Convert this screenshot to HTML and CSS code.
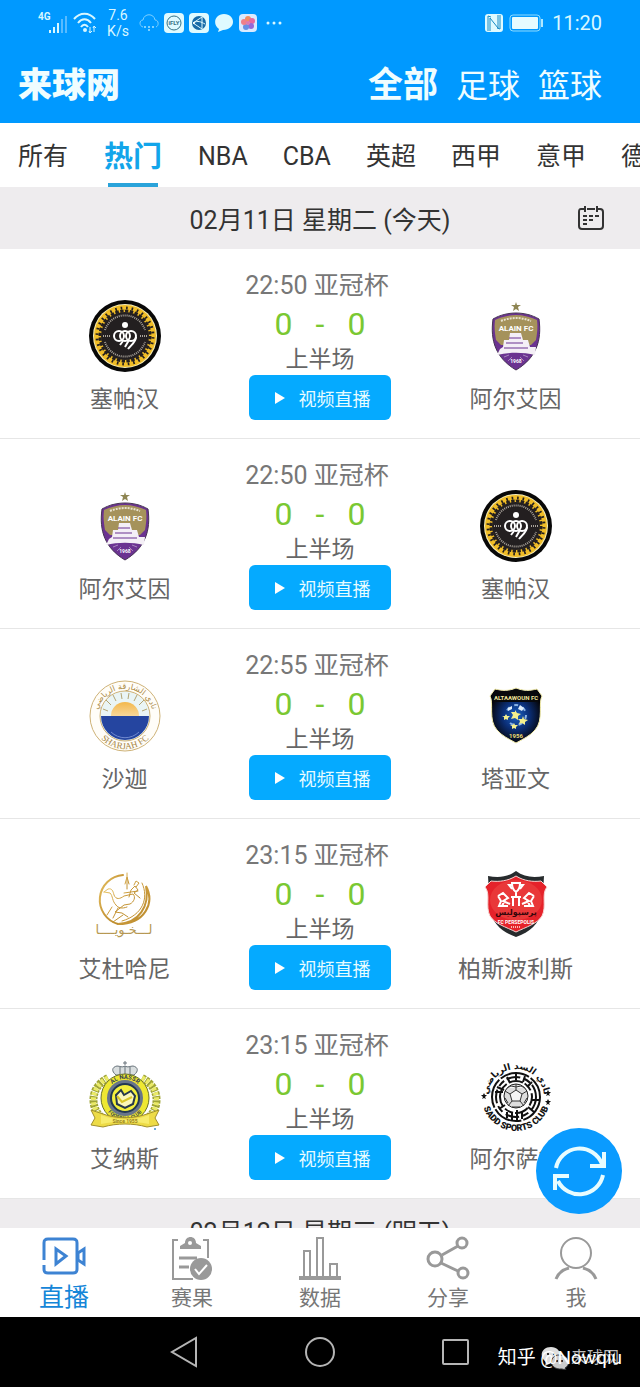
FILE: index.html
```
<!DOCTYPE html>
<html lang="zh">
<head>
    <meta charset="UTF-8">
    <meta name="viewport" content="width=device-width, initial-scale=1.0">
    <title>来球网</title>
    <link rel="stylesheet" href="styles.css">
</head>
<body>
    <!-- 球队徽章 -->
    <svg class="sprite" aria-hidden="true">
        <defs>
            <linearGradient id="gold" x1="0" y1="0" x2="1" y2="1">
                <stop offset="0" stop-color="#e6c263"/>
                <stop offset="0.5" stop-color="#c9993a"/>
                <stop offset="1" stop-color="#b98a2c"/>
            </linearGradient>
            <linearGradient id="sun" x1="0" y1="0" x2="0" y2="1">
                <stop offset="0" stop-color="#f3b84c"/>
                <stop offset="1" stop-color="#f7d79a"/>
            </linearGradient>
            <radialGradient id="night">
                <stop offset="0" stop-color="#1b62c4"/>
                <stop offset="0.5" stop-color="#0b2f78"/>
                <stop offset="1" stop-color="#05060c"/>
            </radialGradient>
            <path id="nassrTop" d="M17 38a19 19 0 0 1 38 0"/>
            <path id="nassrBottom" d="M14 38a22 22 0 0 0 44 0"/>
            <path id="ringTopWide" d="M8 37a28 28 0 0 1 56 0"/>
            <path id="ringBottomWide" d="M3 36a33 33 0 0 0 66 0"/>
            <path id="saddBottom" d="M2 37a34 34 0 0 0 68 0"/>
        </defs>
        <symbol id="sepahan" viewBox="0 0 72 72">
            <circle cx="36" cy="36" r="36" fill="#080808"/>
            <circle cx="36" cy="36" r="32" fill="#f7eeb8"/>
            <circle cx="36" cy="36" r="31" fill="#f0bd27"/>
            <circle cx="36" cy="36" r="24" fill="#231f20"/>
            <g fill="none" stroke="#231f20">
                <circle cx="36" cy="36" r="25" stroke-width="3" pathLength="320" stroke-dasharray="7 3"/>
                <circle cx="36" cy="36" r="28" stroke-width="3" pathLength="320" stroke-dasharray="3 7" stroke-dashoffset="-2"/>
            </g>
            <g fill="none" stroke="#a9a39a" stroke-width="2" stroke-dasharray="1 1">
                <path d="M16 30a21 21 0 0 1 40 0M16 42a21 21 0 0 0 40 0"/>
                <path d="M14 36h7M51 36h7"/>
            </g>
            <circle cx="36" cy="25" r="3" fill="#fff"/>
            <g fill="none" stroke="#fff" stroke-width="2">
                <circle cx="30" cy="36" r="5"/>
                <circle cx="36" cy="36" r="5"/>
                <circle cx="42" cy="36" r="5"/>
                <path d="M34 41l-3 4M40 40l-4 7M47 37c0 5-5 8-8 12"/>
            </g>
        </symbol>
        <symbol id="alain" viewBox="0 0 72 72">
            <path d="M36 2l1 3h4l-3 2 1 4-3-2-3 2 1-4-3-2h4z" fill="#8e8552"/>
            <path d="M36 13c8 0 16 2 23 6 3 22-3 39-23 51C16 58 10 41 13 19c7-4 15-6 23-6z" fill="#6b3391" stroke="#453253" stroke-width="1"/>
            <path d="M36 15c7 0 15 2 21 5 1 8 0 14-1 20l-5 5H21l-5-5c-1-6-2-12-1-20 6-3 14-5 21-5z" fill="#a5925b"/>
            <path d="M21 21c10-4 20-4 30 0" fill="none" stroke="#e8e1cb" stroke-width="2" stroke-dasharray="2 1"/>
            <text x="36" y="31" text-anchor="middle" font-size="8" font-weight="700" fill="#fff">ALAIN FC</text>
            <path d="M30 33h11l2 7h5l2 7h6l-1 8c-12-3-26-3-38 0l3-6 3-2 1-7h5z" fill="#f4eff6"/>
            <path d="M29 38h12M26 43h17M24 48h24" stroke="#6b3391" stroke-width="1"/>
            <path d="M24 57l5-2M28 61l4-4M48 57l-5-2M44 61l-4-4" stroke="#a786bd"/>
            <text x="36" y="63" text-anchor="middle" font-size="5" font-weight="700" fill="#fff">1968</text>
        </symbol>
        <symbol id="sharjah" viewBox="0 0 72 72">
            <circle cx="36" cy="36" r="35" fill="#fffdf8" stroke="#ceb277" stroke-width="1"/>
            <circle cx="36" cy="36" r="25" fill="#eaf5f5" stroke="#ceb277" stroke-width="1"/>
            <path d="M22 36a14 14 0 0 1 28 0z" fill="url(#sun)"/>
            <path d="M19 31l-5-2M22 25l-5-5M27 21l-3-6M33 19l-1-6M39 19l1-6M45 21l3-6M50 25l5-5M53 31l5-2" stroke="#b3a473" stroke-width="1"/>
            <path d="M12 36h48a24 24 0 0 1-48 0z" fill="#2545a0"/>
            <path d="M22 52a20 20 0 0 0 28 0" fill="none" stroke="#6f88cf" stroke-width="1"/>
            <text class="arabic" font-size="8" fill="#ab8a45" text-anchor="middle"><textPath href="#ringTopWide" startOffset="50%">نادي الشارقة الرياضي</textPath></text>
            <text class="serif" font-size="9" fill="#a5833f" text-anchor="middle"><textPath href="#ringBottomWide" startOffset="50%">SHARJAH FC</textPath></text>
        </symbol>
        <symbol id="altaawoun" viewBox="0 0 72 72">
            <path d="M36 8c-7 3-14 3-21 1l-5 7c4 7-2 24 7 34 5 6 12 9 19 13 7-4 14-7 19-13 9-10 3-27 7-34l-5-7c-7 2-14 2-21-1z" fill="url(#night)" stroke="#f2ecac" stroke-width="1"/>
            <path d="M36 9c-7 3-14 3-20 1l-4 6c2 2 2 4 2 6h44c0-2 0-4 2-6l-4-6c-6 2-13 2-20-1z" fill="#08090c"/>
            <text x="36" y="20" text-anchor="middle" font-size="6" font-weight="700" fill="#f3e69b">ALTAAWOUN FC</text>
            <circle cx="36" cy="35" r="10" fill="none" stroke="#8bb4e6" stroke-width="2" stroke-dasharray="4 5"/>
            <g fill="#f4ef8c">
                <path d="M35 30l2 3 4 1-3 2v4l-3-2-4 1 2-4-2-3h4z"/>
                <path d="M43 36l1 3 4 1-3 2v3l-3-2-3 1 1-3-2-2h4z"/>
                <path d="M34 43l1 2h3l-2 2v2l-2-1-2 1v-3l-2-1h3z"/>
                <path d="M26 34l1 2h3l-2 2v2l-2-1-2 1v-3l-2-1h3z"/>
            </g>
            <path d="M40 25l4 3-2 3-4-2zM28 28l4-2v3l-4 2z" fill="#e1eefb"/>
            <text x="36" y="58" text-anchor="middle" font-size="6" font-weight="700" fill="#f0df70">1956</text>
        </symbol>
        <symbol id="duhail" viewBox="0 0 72 72">
            <g fill="none" stroke="url(#gold)" stroke-linecap="round">
                <path d="M34 5a25 25 0 0 0-5 49" stroke-width="2"/>
                <path d="M57 16c9 17-1 38-28 38 21-1 32-18 28-38z" stroke-width="2"/>
                <path d="M53 13c7 15 1 32-20 38" stroke-width="1"/>
                <path d="M38 3v16M36 14l2-7 2 7" stroke-width="1"/>
                <path d="M15 22l4-3c4-1 5 2 6 6 2 5 6 4 10 1l9-2c3 3 1 8-3 10l-6 1-9 7 7 1 6 4" stroke-width="1"/>
                <path d="M15 22l6 1c3 3 2 8 6 12 2 3 6 4 11 2M23 37l-5 8M29 38l-5 10M34 45l-10 7" stroke-width="1"/>
                <path d="M40 27l2-7 4-4 3 4-4 3 6 5M45 15l2-4 3 2-3 4M35 23l14-2" stroke-width="1"/>
            </g>
            <text class="arabic" x="35" y="64" text-anchor="middle" font-size="13" fill="#b69852">لـــخـويــــا</text>
        </symbol>
        <symbol id="persepolis" viewBox="0 0 72 72">
            <path d="M8 6c11 2 20 1 28-5 8 6 17 7 28 5l-2 34c-3 14-12 22-26 27C22 62 13 54 10 40z" fill="#272b2d"/>
            <path d="M36 6c-8 5-17 6-25 5l-6 6c6 7 0 19 5 29 5 8 16 11 26 16 10-5 21-8 26-16 5-10-1-22 5-29l-6-6c-8 1-17 0-25-5z" fill="#e5222a" stroke="#f6d5d3" stroke-width="1"/>
            <ellipse cx="36" cy="30" rx="26" ry="20" fill="#f05a50" opacity="0.4"/>
            <g fill="none" stroke="#fff" stroke-width="2">
                <path d="M32 13h8c0 5-1 7-4 9-3-2-4-4-4-9zM32 15h-3l3 4M40 15h3l-3 4M36 22v4M31 27h10M33 27v9M39 27v9"/>
                <path d="M18 26l5-3 5 5-5 3 7 3M18 26l3 5-2 5h9M25 30l-3 6M54 26l-5-3-5 5 5 3-7 3M54 26l-3 5 2 5h-9M47 30l3 6"/>
            </g>
            <text class="arabic" x="36" y="45" text-anchor="middle" font-size="8" font-weight="700" fill="#35060a">پرسپولیس</text>
            <text x="36" y="54" text-anchor="middle" font-size="5" font-weight="700" fill="#fff">FC PERSEPOLIS</text>
            <path d="M31 57h10" stroke="#f8b8b4" stroke-width="2" stroke-dasharray="1 1"/>
        </symbol>
        <symbol id="nassr" viewBox="0 0 72 72">
            <path d="M27 15c-5-4-4-8 1-9 3 0 5 2 8 0 3 2 5 0 8 0 5 1 6 5 1 9z" fill="#d9dedf" stroke="#68737b" stroke-width="1"/>
            <path d="M31 7v7M36 6v9M41 7v7M36 1v4M34 3h4" stroke="#68737b" stroke-width="1"/>
            <g fill="none">
                <path d="M19 18C1 27 1 47 12 57M53 18c18 9 18 29 7 39" stroke="#a0a537" stroke-width="8" stroke-dasharray="3 1"/>
                <path d="M19 18C1 27 1 47 12 57M53 18c18 9 18 29 7 39" stroke="#eaea68" stroke-width="5" stroke-dasharray="3 2"/>
            </g>
            <circle cx="36" cy="38" r="24" fill="#eee832" stroke="#6b7325" stroke-width="1"/>
            <circle cx="36" cy="38" r="18" fill="#68758a"/>
            <circle cx="36" cy="38" r="14" fill="#f3ef3d" stroke="#223851" stroke-width="2"/>
            <path d="M27 35l5-5 3 5 7-4 4 5-2 8-8 4-8-4z" fill="#fbf7b8" stroke="#26384b" stroke-width="2"/>
            <path d="M28 36l5 6 10-5" fill="none" stroke="#d9c728" stroke-width="2"/>
            <text font-size="6" font-weight="700" fill="#354250" text-anchor="middle"><textPath href="#nassrTop" startOffset="50%">AL NASSR</textPath></text>
            <text font-size="5" font-weight="700" fill="#354250" text-anchor="middle"><textPath href="#nassrBottom" startOffset="50%">FOOTBALL CLUB</textPath></text>
            <path d="M2 50l12 4c14 5 30 5 44 0l12-4-4 8 4 7-12 2c-14-4-30-4-44 0L2 65l4-7z" fill="#eddb47" stroke="#a2902d" stroke-width="1"/>
            <path d="M12 55c15 6 33 6 48 0v9c-15-3-33-3-48 0z" fill="#f7ec6c"/>
            <text x="36" y="63" text-anchor="middle" font-size="5" font-weight="700" fill="#9a821e">Since 1955</text>
            <circle cx="66" cy="69" r="1" fill="#3d8bc7"/>
        </symbol>
        <symbol id="sadd" viewBox="0 0 72 72">
            <circle cx="36" cy="37" r="24" fill="#fff" stroke="#111" stroke-width="2" stroke-dasharray="30 2"/>
            <g fill="none" stroke="#111" stroke-width="2">
                <circle cx="36" cy="37" r="20" stroke-dasharray="14 4 7 3"/>
                <circle cx="36" cy="37" r="16" stroke-dasharray="9 3 14 2"/>
                <path d="M15 32h8M17 27l7 3M36 13v7M27 17l3 6M45 16l-2 6M52 22l-5 5M19 49l6-4M27 52v6M32 52v8M37 50v10M42 52v7M48 47l6 5M51 40h8"/>
            </g>
            <circle cx="36" cy="36" r="12" fill="#ddd" stroke="#222" stroke-width="1"/>
            <path d="M36 30l6 4-2 7h-8l-2-7zM36 30v-6M42 34l5-3M40 41l4 5M32 41l-4 5M30 34l-5-3M27 28l4-2 5 1 5-1 4 2M25 38l3 5M47 38l-3 5M32 47h8" fill="#f6f6f6" stroke="#333" stroke-width="1"/>
            <text class="arabic" font-size="9" font-weight="700" fill="#111" text-anchor="middle"><textPath href="#ringTopWide" startOffset="50%">نادي السد الرياضي</textPath></text>
            <text font-size="9" font-weight="900" fill="#111" text-anchor="middle"><textPath href="#saddBottom" startOffset="50%">SADD SPORTS CLUB</textPath></text>
            <path d="M4 33l1 2h2l-2 2 1 2-2-1-2 1 1-2-2-2h2zM68 30l1 2h2l-2 2 1 2-2-1-2 1 1-2-2-2h2zM68 39l1 2h2l-2 2 1 2-2-1-2 1 1-2-2-2h2z" fill="#111"/>
        </symbol>
    </svg>

    <header class="header">
        <div class="status-bar">
            <div class="status-left">
                <svg width="30" height="24" viewBox="0 0 30 24">
                    <text x="0" y="9" font-size="10" font-weight="700" fill="#d8f7ff">4G</text>
                    <path d="M12 22v-3M16 22v-6M20 22V12" stroke="#d8f7ff" stroke-width="2"/>
                    <path d="M24 22V8M28 22V5" stroke="#58bbff" stroke-width="2"/>
                </svg>
                <svg width="24" height="22" viewBox="0 0 24 22" fill="none" stroke="#d8f7ff" stroke-width="2">
                    <path d="M1 7c6-7 15-7 21 0M5 11c4-5 9-5 13 0M8 15c2-3 5-3 7 0"/>
                    <circle cx="12" cy="18" r="1" fill="#d8f7ff"/>
                    <path d="M17 15v5M21 15v5" stroke-width="1"/>
                    <path d="M16 19l1 2 2-2M20 16l1-2 2 2" stroke-width="1"/>
                </svg>
                <div class="speed">7.6<br>K/s</div>
                <svg width="20" height="20" viewBox="0 0 20 20" fill="none" stroke="#7dd0ff" stroke-width="1">
                    <path d="M4 14C0 13 0 7 4 7c1-7 11-7 12 0 4 0 4 6 1 7"/>
                    <path d="M6 13v3M10 13v5M14 13v3" stroke-width="2" stroke-dasharray="2 1"/>
                </svg>
                <svg width="20" height="20" viewBox="0 0 20 20">
                    <rect width="20" height="20" rx="4" fill="#dffaff"/>
                    <circle cx="10" cy="10" r="7" fill="none" stroke="#347287"/>
                    <text x="10" y="12" text-anchor="middle" font-size="6" font-weight="700" fill="#347287">iFLY</text>
                </svg>
                <svg width="20" height="20" viewBox="0 0 20 20">
                    <rect width="20" height="20" rx="4" fill="#dffaff"/>
                    <circle cx="10" cy="10" r="7" fill="#176aa7"/>
                    <path d="M4 10l9-6M4 10l9 6M13 4v12M4 10c5-3 8-1 12 1" fill="none" stroke="#dffaff"/>
                    <circle cx="5" cy="10" r="1" fill="#fff"/>
                </svg>
                <svg width="20" height="20" viewBox="0 0 20 20">
                    <path d="M10 1c6 0 9 4 9 8s-4 8-10 8l-5 2 1-3C-2 11 1 1 10 1z" fill="#dffaff"/>
                </svg>
                <svg width="18" height="18" viewBox="0 0 18 18">
                    <rect width="18" height="18" rx="4" fill="#d9eaff"/>
                    <circle cx="9" cy="5" r="3" fill="#f18e62"/>
                    <circle cx="13" cy="7" r="3" fill="#e669a1"/>
                    <circle cx="12" cy="12" r="3" fill="#9568d8"/>
                    <circle cx="7" cy="13" r="3" fill="#6690e5"/>
                    <circle cx="5" cy="8" r="3" fill="#ef7f89"/>
                    <circle cx="9" cy="9" r="2" fill="#dc7bb1"/>
                </svg>
                <svg class="dots" width="16" height="4" viewBox="0 0 16 4" fill="#d8f7ff">
                    <circle cx="2" cy="2" r="1.5"/><circle cx="8" cy="2" r="1.5"/><circle cx="14" cy="2" r="1.5"/>
                </svg>
            </div>
            <div class="status-right">
                <svg width="20" height="20" viewBox="0 0 20 20">
                    <rect x="1" y="1" width="18" height="18" rx="3" fill="#dffaff"/>
                    <path d="M6 18V5l8 10V2" fill="none" stroke="#168bc4" stroke-width="1"/>
                    <path d="M4 18V3l3 1M16 2v14l-3-1" fill="none" stroke="#168bc4" stroke-width="1"/>
                </svg>
                <svg width="36" height="18" viewBox="0 0 36 18">
                    <rect x="1" y="1" width="30" height="16" rx="3" fill="none" stroke="#8cdaff" stroke-width="1"/>
                    <rect x="3" y="3" width="26" height="12" rx="1" fill="#e6fbff"/>
                    <path d="M33 5v8" stroke="#b0e8ff" stroke-width="2"/>
                </svg>
                <span class="clock">11:20</span>
            </div>
        </div>
        <div class="title-bar">
            <h1 class="brand">来球网</h1>
            <nav class="sports">
                <a href="#all" class="active">全部</a>
                <a href="#football">足球</a>
                <a href="#basketball">篮球</a>
            </nav>
        </div>
    </header>

    <nav class="tabs">
        <a href="#all">所有</a>
        <a href="#hot" class="active">热门</a>
        <a href="#nba">NBA</a>
        <a href="#cba">CBA</a>
        <a href="#epl">英超</a>
        <a href="#laliga">西甲</a>
        <a href="#seriea">意甲</a>
        <a href="#bundesliga">德甲</a>
    </nav>

    <main class="content">
        <div class="match-list">
            <div class="date-bar">
                <h2>02月11日 星期二 (今天)</h2>
                <button class="calendar" type="button" aria-label="选择日期">
                    <svg width="28" height="26" viewBox="0 0 28 26" fill="none" stroke="#333" stroke-width="2">
                        <path d="M7 4H4C2 4 2 5 2 7v14c0 2 1 3 3 3h18c2 0 3-1 3-3V7c0-2-1-3-3-3h-2M10 4h8M8 1v6M20 1v6"/>
                        <path d="M6 11h4M12 11h4M18 11h4M6 15h4M12 15h4M6 19h4"/>
                    </svg>
                </button>
            </div>

            <article class="match">
                <div class="team"><svg class="logo"><use href="#sepahan"/></svg><span>塞帕汉</span></div>
                <div class="info">
                    <div class="time">22:50 亚冠杯</div>
                    <div class="score"><span>0</span><span>-</span><span>0</span></div>
                    <div class="period">上半场</div>
                    <button class="live-btn" type="button"><svg width="12" height="14" viewBox="0 0 12 14"><path d="M1 1l10 6-10 6z"/></svg>视频直播</button>
                </div>
                <div class="team"><svg class="logo"><use href="#alain"/></svg><span>阿尔艾因</span></div>
            </article>

            <article class="match">
                <div class="team"><svg class="logo"><use href="#alain"/></svg><span>阿尔艾因</span></div>
                <div class="info">
                    <div class="time">22:50 亚冠杯</div>
                    <div class="score"><span>0</span><span>-</span><span>0</span></div>
                    <div class="period">上半场</div>
                    <button class="live-btn" type="button"><svg width="12" height="14" viewBox="0 0 12 14"><path d="M1 1l10 6-10 6z"/></svg>视频直播</button>
                </div>
                <div class="team"><svg class="logo"><use href="#sepahan"/></svg><span>塞帕汉</span></div>
            </article>

            <article class="match">
                <div class="team"><svg class="logo"><use href="#sharjah"/></svg><span>沙迦</span></div>
                <div class="info">
                    <div class="time">22:55 亚冠杯</div>
                    <div class="score"><span>0</span><span>-</span><span>0</span></div>
                    <div class="period">上半场</div>
                    <button class="live-btn" type="button"><svg width="12" height="14" viewBox="0 0 12 14"><path d="M1 1l10 6-10 6z"/></svg>视频直播</button>
                </div>
                <div class="team"><svg class="logo"><use href="#altaawoun"/></svg><span>塔亚文</span></div>
            </article>

            <article class="match">
                <div class="team"><svg class="logo"><use href="#duhail"/></svg><span>艾杜哈尼</span></div>
                <div class="info">
                    <div class="time">23:15 亚冠杯</div>
                    <div class="score"><span>0</span><span>-</span><span>0</span></div>
                    <div class="period">上半场</div>
                    <button class="live-btn" type="button"><svg width="12" height="14" viewBox="0 0 12 14"><path d="M1 1l10 6-10 6z"/></svg>视频直播</button>
                </div>
                <div class="team"><svg class="logo"><use href="#persepolis"/></svg><span>柏斯波利斯</span></div>
            </article>

            <article class="match">
                <div class="team"><svg class="logo"><use href="#nassr"/></svg><span>艾纳斯</span></div>
                <div class="info">
                    <div class="time">23:15 亚冠杯</div>
                    <div class="score"><span>0</span><span>-</span><span>0</span></div>
                    <div class="period">上半场</div>
                    <button class="live-btn" type="button"><svg width="12" height="14" viewBox="0 0 12 14"><path d="M1 1l10 6-10 6z"/></svg>视频直播</button>
                </div>
                <div class="team"><svg class="logo"><use href="#sadd"/></svg><span>阿尔萨德</span></div>
            </article>

            <div class="date-bar">
                <h2>02月12日 星期三 (明天)</h2>
            </div>
        </div>

        <button class="refresh" type="button" aria-label="刷新">
            <svg width="56" height="56" viewBox="0 0 56 56" fill="none" stroke="#e8fcff" stroke-width="4">
                <path d="M5 25A24 24 0 0 1 51 21M53 9v14H39"/>
                <path d="M52 32A24 24 0 0 1 7 38M4 47V33h14"/>
            </svg>
        </button>
    </main>

    <nav class="bottom-nav">
        <a href="#live" class="active">
            <svg width="44" height="44" viewBox="0 0 44 44" fill="none" stroke="#3d83d3" stroke-width="3">
                <path d="M2 24V7c0-3 1-4 4-4h25c3 0 4 1 4 4v26c0 3-1 4-4 4H6c-3 0-4-1-4-4v-4"/>
                <path d="M14 13l10 7-10 8zM36 17l6-4v15l-6-4z"/>
            </svg>
            <span>直播</span>
        </a>
        <a href="#results">
            <svg width="44" height="44" viewBox="0 0 44 44" fill="none" stroke="#999" stroke-width="3">
                <path d="M8 4H3v39h20M33 4h5v18" stroke-width="2"/>
                <path d="M10 13v-3l5-3c0-8 11-8 11 0l5 3v3z" fill="#999" stroke="none"/>
                <circle cx="20" cy="7" r="2" fill="#fff" stroke="none"/>
                <path d="M9 22h18M9 31h10"/>
                <circle cx="31" cy="33" r="11" fill="#999" stroke="none"/>
                <path d="M25 33l4 5 8-9" stroke="#fff" stroke-width="2"/>
            </svg>
            <span>赛果</span>
        </a>
        <a href="#data">
            <svg width="44" height="44" viewBox="0 0 44 44" fill="none" stroke="#999" stroke-width="2">
                <path d="M6 41V15h6v26M19 41V2h6v39M32 41V28h7v13"/>
                <path d="M1 42h42" stroke-width="4"/>
            </svg>
            <span>数据</span>
        </a>
        <a href="#share">
            <svg width="44" height="44" viewBox="0 0 44 44" fill="none" stroke="#999" stroke-width="3">
                <circle cx="9" cy="23" r="7"/>
                <circle cx="36" cy="7" r="5"/>
                <circle cx="37" cy="37" r="5"/>
                <path d="M16 19l16-9M15 27l17 8"/>
            </svg>
            <span>分享</span>
        </a>
        <a href="#me">
            <svg width="44" height="44" viewBox="0 0 44 44" fill="none" stroke="#999" stroke-width="2">
                <circle cx="22" cy="17" r="15"/>
                <path d="M15 32C7 34 4 38 2 43M29 32c8 2 11 6 13 11" stroke-width="3"/>
            </svg>
            <span>我</span>
        </a>
    </nav>

    <footer class="system-nav">
        <button type="button" aria-label="返回">
            <svg width="32" height="32" viewBox="0 0 32 32"><path d="M28 2v28L4 16z"/></svg>
        </button>
        <button type="button" aria-label="主页">
            <svg width="32" height="32" viewBox="0 0 32 32"><circle cx="16" cy="16" r="14"/></svg>
        </button>
        <button type="button" aria-label="最近任务">
            <svg width="32" height="32" viewBox="0 0 32 32"><rect x="3" y="4" width="25" height="24" rx="1"/></svg>
        </button>
        <div class="wechat-mark">
            <svg width="28" height="24" viewBox="0 0 28 24">
                <path d="M10 1c12 0 12 16 0 16l-6 3 1-4C-3 10 1 1 10 1z" fill="#ddd"/>
                <path d="M18 9c11 0 12 10 6 13l1 2-4-1C7 24 8 9 18 9z" fill="#ccc" stroke="#333"/>
                <path d="M7 7v2M13 7v2M16 14v2M21 14v2" stroke="#333" stroke-width="2"/>
            </svg>
            <span>来球网</span>
        </div>
        <div class="zhihu-mark">知乎 @Nowqiu</div>
    </footer>
</body>
</html>
```

FILE: styles.css
```
* {
    margin: 0;
    padding: 0;
    box-sizing: border-box;
}

body {
    font-family: Roboto, "Noto Sans CJK SC", sans-serif;
    background-color: #fff;
    color: #333;
    display: flex;
    flex-direction: column;
    height: 100vh;
    overflow: hidden;
}

a {
    color: inherit;
    text-decoration: none;
}

button {
    border: none;
    background: none;
    font-family: inherit;
    cursor: pointer;
}

svg {
    display: block;
    flex-shrink: 0;
}

.sprite {
    position: absolute;
    width: 0;
    height: 0;
}

.arabic {
    font-family: "DejaVu Sans", sans-serif;
}

.serif {
    font-family: "Liberation Serif", serif;
}

/* 顶部 */
.header {
    background-color: #0099ff;
    color: #effdff;
}

.status-bar {
    display: flex;
    justify-content: space-between;
    align-items: center;
    height: 45px;
    padding: 0 38px;
}

.status-left,
.status-right {
    display: flex;
    align-items: center;
    gap: 5px;
}

.speed {
    width: 24px;
    margin: 0 4px;
    font-size: 14px;
    line-height: 16px;
    text-align: center;
    color: #d8f7ff;
}

.dots {
    margin-left: 4px;
}

.clock {
    margin-left: 2px;
    font-size: 20px;
    color: #d8f7ff;
}

.title-bar {
    display: flex;
    justify-content: space-between;
    align-items: center;
    height: 78px;
    padding: 0 38px 0 18px;
}

.brand {
    padding-bottom: 4px;
    font-size: 34px;
    font-weight: 900;
}

.sports {
    display: flex;
    align-items: center;
    gap: 18px;
    padding-top: 4px;
    font-size: 32px;
    line-height: 48px;
}

.sports .active {
    font-size: 35px;
    font-weight: 700;
}

/* 联赛标签 */
.tabs {
    display: flex;
    gap: 35px;
    flex-shrink: 0;
    height: 64px;
    padding-left: 18px;
    overflow: hidden;
    font-size: 25px;
    line-height: 68px;
    white-space: nowrap;
}

.tabs .active {
    position: relative;
    height: 64px;
    padding: 0 1px;
    font-size: 29px;
    font-weight: 700;
    color: #12a5ea;
}

.tabs .active::after {
    content: "";
    position: absolute;
    left: 5px;
    right: 5px;
    bottom: 0;
    height: 4px;
    background-color: #2aa3da;
}

/* 比赛列表 */
.content {
    position: relative;
    flex: 1;
    min-height: 0;
}

.match-list {
    height: 100%;
    overflow-y: auto;
    scrollbar-width: none;
}

.date-bar {
    display: grid;
    grid-template-columns: 1fr auto 1fr;
    align-items: center;
    height: 62px;
    padding: 0 35px;
    background-color: #eeecee;
}

.date-bar h2 {
    grid-column: 2;
    font-size: 25px;
    font-weight: 400;
}

.calendar {
    justify-self: end;
}

.match {
    display: grid;
    grid-template-columns: 1fr 142px 1fr;
    height: 190px;
    border-bottom: 1px solid #e6e6e6;
    color: #666;
}

.team {
    display: flex;
    flex-direction: column;
    align-items: center;
    gap: 10px;
    padding-top: 51px;
    font-size: 23px;
    line-height: 36px;
}

.logo {
    width: 72px;
    height: 72px;
}

.info {
    display: flex;
    flex-direction: column;
    align-items: center;
    padding-top: 20px;
    white-space: nowrap;
}

.time {
    padding-right: 6px;
    font-size: 25px;
    line-height: 34px;
    color: #777;
}

.score {
    display: flex;
    gap: 23px;
    font-size: 32px;
    line-height: 42px;
    color: #7ac832;
}

.period {
    font-size: 23px;
    line-height: 30px;
}

.live-btn {
    display: flex;
    justify-content: center;
    align-items: center;
    gap: 13px;
    width: 100%;
    height: 45px;
    padding-left: 4px;
    border-radius: 6px;
    background-color: #05aaff;
    color: #e8fcff;
    font-size: 18px;
}

.live-btn svg {
    fill: #fff;
}

.refresh {
    position: absolute;
    right: 18px;
    bottom: 14px;
    display: flex;
    justify-content: center;
    align-items: center;
    width: 86px;
    height: 86px;
    border-radius: 50%;
    background-color: #0a9bff;
}

/* 底部导航 */
.bottom-nav {
    display: grid;
    grid-template-columns: repeat(5, 1fr);
    height: 89px;
    padding-top: 8px;
    flex-shrink: 0;
    background-color: #fff;
    color: #777;
    font-size: 21px;
    line-height: 36px;
}

.bottom-nav a {
    display: flex;
    flex-direction: column;
    align-items: center;
}

.bottom-nav .active {
    color: #1586d8;
    font-size: 25px;
}

.system-nav {
    position: relative;
    display: flex;
    justify-content: center;
    align-items: center;
    gap: 104px;
    height: 70px;
    flex-shrink: 0;
    background-color: #000;
}

.system-nav button svg {
    fill: none;
    stroke: #b5b5b5;
    stroke-width: 2;
}

/* 水印 */
.wechat-mark,
.zhihu-mark {
    position: absolute;
    bottom: 16px;
    line-height: 26px;
    white-space: nowrap;
}

.wechat-mark {
    right: 21px;
    display: flex;
    align-items: center;
    gap: 2px;
    font-size: 16px;
    color: #bbb;
}

.zhihu-mark {
    right: 18px;
    font-size: 19px;
    color: #fff;
}
```
